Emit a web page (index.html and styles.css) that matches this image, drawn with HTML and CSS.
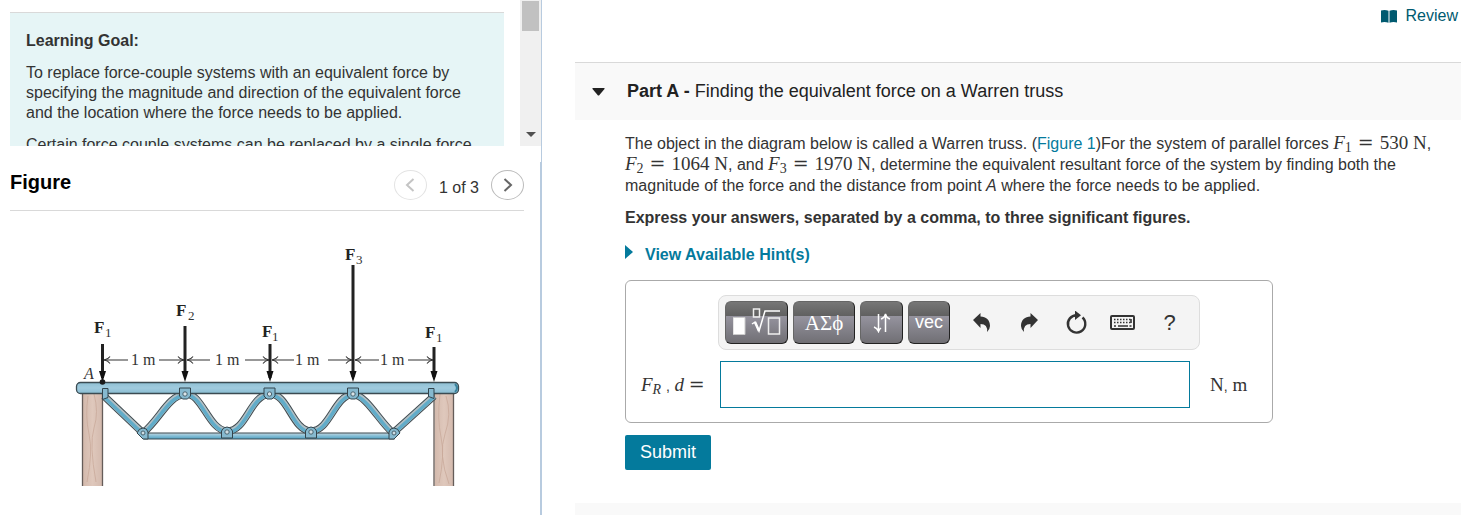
FILE: index.html
```html
<!DOCTYPE html>
<html lang="en">
<head>
<meta charset="utf-8">
<title>Part A - Finding the equivalent force on a Warren truss</title>
<link rel="stylesheet" href="styles.css">
</head>
<body>
<div class="layout">
  <aside class="side">
    <section class="intro">
      <div class="intro-scroll">
        <div class="goal">
          <p><strong>Learning Goal:</strong></p>
          <p>To replace force-couple systems with an equivalent force by specifying the magnitude and direction of the equivalent force and the location where the force needs to be applied.</p>
          <p>Certain force couple systems can be replaced by a single force</p>
        </div>
      </div>
      <div class="scrollbar" aria-hidden="true">
        <div class="thumb"></div>
        <svg width="10" height="6" viewBox="0 0 10 6"><path d="M0 0h10L5 5z" fill="#505050"/></svg>
      </div>
    </section>
    <section class="figure">
      <header class="figure-head">
        <h2>Figure</h2>
        <nav class="pager" aria-label="Figures">
          <button class="page-btn" type="button" aria-label="Previous figure" disabled><svg width="10" height="14" viewBox="0 0 10 14"><path d="M8.500 1L2 7l6.500 6" fill="none" stroke="currentColor" stroke-width="2"/></svg></button>
          <span class="page-count">1 of 3</span>
          <button class="page-btn" type="button" aria-label="Next figure"><svg width="10" height="14" viewBox="0 0 10 14"><path d="M1.500 1L8 7l-6.500 6" fill="none" stroke="currentColor" stroke-width="2"/></svg></button>
        </nav>
      </header>
      <svg class="truss" width="390" height="250" viewBox="75 240 390 250" role="img" aria-label="Warren truss with downward forces">
        <defs>
          <linearGradient id="wood"><stop offset="0" stop-color="#d3b9ac"/><stop offset=".5" stop-color="#dfc8bc"/><stop offset="1" stop-color="#d4baae"/></linearGradient>
          <linearGradient id="chord" x1="0" y1="0" x2="0" y2="1"><stop offset="0" stop-color="#c3d3da"/><stop offset=".4" stop-color="#8fc3d9"/><stop offset="1" stop-color="#4f9fbf"/></linearGradient>
          <linearGradient id="beam" x1="0" y1="0" x2="0" y2="1"><stop offset="0" stop-color="#8fc0d4"/><stop offset=".5" stop-color="#a0cbde"/><stop offset="1" stop-color="#8abdd2"/></linearGradient>
          <g id="down"><path d="M-3.500-9h7L0 2z" fill="#111"/></g>
          <g id="plate"><path d="M-5.500-6h11V2L2.500 5h-5L-5.500 2z" fill="#86b9cf" stroke="#33444c"/><circle r="2.200" fill="#dbe5e9" stroke="#4a6470"/></g>
          <g id="foot"><path d="M-5.500 6V-1Q-4-5 0-5T5.500-1V6z" fill="#86b9cf" stroke="#33444c"/><circle r="2.200" fill="#cfdde3" stroke="#4a6470"/></g>
        </defs>
        <path fill="url(#wood)" d="M83 392h19v94H83z"/>
        <path fill="url(#wood)" d="M434.500 392h19v94h-19z"/>
        <path d="M82.500 392v94M102.500 392v94M434 392v94M453.500 392v94" stroke="#655c59" stroke-width="1.300"/>
        <g fill="none" stroke="#c9a99b" stroke-width=".8">
          <path d="M88 396q-3 20 1 38t-2 48M94 394q5 18 0 34t2 54M440 394q-3 25 1 43t-2 46M446 396q6 18-1 38t4 50"/>
        </g>
        <path d="M144 433h250v6H144z" fill="url(#chord)" stroke="#3b4b52" stroke-width="1.200"/>
        <g fill="none">
          <path d="M104 396L143 433C160 419 168 396 185 394S208 430 227 431S250 396 269 394S292 431 311 431S334 396 353 394C367 396 379 421 393 433L434 396" stroke="#424d52" stroke-width="7.500"/>
          <path d="M104 396L143 433C160 419 168 396 185 394S208 430 227 431S250 396 269 394S292 431 311 431S334 396 353 394C367 396 379 421 393 433L434 396" stroke="#b0bfc5" stroke-width="5.500"/>
          <path d="M104 397L143 434C160 420 168 397 185 395S208 431 227 432S250 397 269 395S292 432 311 432S334 397 353 395C367 397 379 422 393 434L434 397" stroke="#61acc9" stroke-width="3.500"/>
        </g>
        <rect x="76.500" y="382.500" width="382" height="11" rx="4" fill="url(#beam)" stroke="#3b4b52" stroke-width="1.300"/>
        <path d="M455 384q4 4 0 8" fill="none" stroke="#39839d" stroke-width="2"/>
        <path d="M102.500 388.500h5.500v9l-5.500 2zM428.500 388.500h5.500v10l-5.500-2z" fill="#86b9cf" stroke="#33444c"/>
        <use href="#plate" x="185" y="394"/><use href="#plate" x="269.500" y="394"/><use href="#plate" x="353" y="394"/>
        <use href="#foot" x="227" y="432"/><use href="#foot" x="311" y="432"/>
        <path d="M137 433q2-5 6-5t5 4v7h-5zM400 433q-2-5-6-5t-5 4v7h5z" fill="#86b9cf" stroke="#33444c"/>
        <circle cx="143" cy="433" r="2" fill="#cfdde3" stroke="#4a6470"/><circle cx="394" cy="433" r="2" fill="#cfdde3" stroke="#4a6470"/>
        <path d="M102.500 344v34M185 326v50M270 344v34M353 265v112M434 347v30" stroke="#222" stroke-width="3"/>
        <use href="#down" x="102.500" y="380"/><use href="#down" x="185" y="380"/><use href="#down" x="270" y="380"/><use href="#down" x="353" y="380"/><use href="#down" x="434" y="380"/>
        <circle cx="102.500" cy="382" r="2.800" fill="#1a1a1a"/>
        <g fill="none" stroke="#333" stroke-width="1.100">
          <path d="M104 360h24M159 360h25M187 360h23M245 360h24M272 360h22M328 360h24M355 360h24M408 360h25"/>
          <path d="M110 356.500q-2 3-6 3.500q4 .5 6 3.500M193 356.500q-2 3-6 3.500q4 .5 6 3.500M278 356.500q-2 3-6 3.500q4 .5 6 3.500M361 356.500q-2 3-6 3.500q4 .5 6 3.500M178 356.500q2 3 6 3.500q-4 .5-6 3.500M263 356.500q2 3 6 3.500q-4 .5-6 3.500M346 356.500q2 3 6 3.500q-4 .5-6 3.500M427 356.500q2 3 6 3.500q-4 .5-6 3.500"/>
        </g>
        <g class="dim"><text x="131" y="365">1 m</text><text x="215" y="365">1 m</text><text x="295" y="365">1 m</text><text x="380" y="365">1 m</text></g>
        <g class="force">
          <text x="94" y="333">F</text><text x="176" y="316">F</text><text x="262" y="337">F</text><text x="345" y="260">F</text><text x="425" y="338">F</text>
        </g>
        <g class="force-sub">
          <text x="105" y="337">1</text><text x="188" y="320">2</text><text x="272" y="341">1</text><text x="356" y="264">3</text><text x="436" y="342">1</text>
        </g>
        <text class="point" x="84" y="379">A</text>
      </svg>
    </section>
  </aside>

  <main class="main">
    <div class="topbar">
      <a class="review" href="#review"><svg width="16" height="13" viewBox="0 0 16 13"><path d="M0 .5Q4-.5 7.500 .8v12Q4 11.500 0 12.500zM8.500 .8Q12-.5 16 .5v12Q12 11.500 8.500 12.800z" fill="#005a70"/></svg>Review</a>
    </div>
    <section class="part">
      <button class="part-head" type="button" aria-expanded="true">
        <svg width="13" height="8" viewBox="0 0 13 8"><path d="M1 0h11q1 0 .5 1L7 7.500H6L.500 1Q0 0 1 0z" fill="#222"/></svg>
        <span><strong>Part A -</strong> Finding the equivalent force on a Warren truss</span>
      </button>
      <div class="part-body">
        <p class="question">The object in the diagram below is called a Warren truss. (<a href="#figure1">Figure 1</a>)For the system of parallel forces <span class="math"><i>F</i><sub>1</sub><span class="eq">=</span>530 N</span>, <span class="math"><i>F</i><sub>2</sub><span class="eq">=</span>1064 N</span>, and <span class="math"><i>F</i><sub>3</sub><span class="eq">=</span>1970 N</span>, determine the equivalent resultant force of the system by finding both the magnitude of the force and the distance from point <i>A</i> where the force needs to be applied.</p>
        <p class="instruction"><strong>Express your answers, separated by a comma, to three significant figures.</strong></p>
        <a class="hints" href="#hints"><svg width="8" height="14" viewBox="0 0 8 14"><path d="M0 0l8 7-8 7z" fill="#047a9c"/></svg>View Available Hint(s)</a>
        <form class="answer">
          <div class="toolbar">
            <button class="tool root" type="button" aria-label="Templates"><svg width="48" height="30" viewBox="0 0 48 30" fill="none" stroke="#fff"><path d="M0 9.500h12v17H0z" fill="#fff" stroke="#ccc"/><path d="M20.500 1h6v8h-6zM35.500 10h11v16h-11z" stroke="#eee" stroke-width="1.500"/><path d="M19 16l3-2 4 9L32 3h15" stroke-width="1.500"/><path d="M22 14l4 9" stroke-width="2.500"/></svg></button>
            <button class="tool greek" type="button">ΑΣϕ</button>
            <button class="tool arrows" type="button" aria-label="Arrows"><svg width="18" height="20" viewBox="0 0 18 20" fill="none" stroke="#fff" stroke-width="1.500"><path d="M5.500 1v17M1 14q3 1 4.500 4.500Q6.500 16 8 15M12.500 19V2M8 6q3.500-1 4.500-5 1 4 4.500 5"/></svg></button>
            <button class="tool vec" type="button">vec</button>
            <div class="plain-group">
              <button class="plain" type="button" aria-label="Undo"><svg width="18" height="20" viewBox="0 0 18 20"><path d="M0 7L7.500 0v3.500C13 3.500 17 7 17 13q0 3-3 6 1-8-6.500-8v4z" fill="#333"/></svg></button>
              <button class="plain" type="button" aria-label="Redo"><svg width="18" height="20" viewBox="0 0 18 20"><path d="M18 7l-7.500-7v3.500C5 3.500 1 7 1 13q0 3 3 6-1-8 6.500-8v4z" fill="#333"/></svg></button>
              <button class="plain" type="button" aria-label="Reset"><svg width="22" height="24" viewBox="0 0 22 24"><path d="M12 4.200A8.700 8.700 0 1 0 17.500 6.500" fill="none" stroke="#333" stroke-width="2.400"/><path d="M10-.500l6 4.700-6 4.800z" fill="#333"/></svg></button>
              <button class="plain" type="button" aria-label="Keyboard"><svg width="25" height="15" viewBox="0 0 25 15"><rect x="1" y="1" width="23" height="13" rx="1" fill="none" stroke="#333" stroke-width="2"/><path d="M4 4.500h17M4 7.500h17" stroke="#333" stroke-width="1.600" stroke-dasharray="1.500 1.500"/><path d="M4 11h2M8 11h10M19.500 11h2M21 4v4" stroke="#333" stroke-width="1.600"/></svg></button>
              <button class="plain help" type="button" aria-label="Help">?</button>
            </div>
          </div>
          <label class="answer-label math" for="answer"><i>F</i><sub><i>R</i></sub> <span class="comma">,</span> <i>d</i> <span class="eq2">=</span></label>
          <input class="answer-input" id="answer" type="text">
          <span class="unit math">N<span class="comma">,</span> m</span>
        </form>
        <button class="submit" type="button">Submit</button>
      </div>
    </section>
    <div class="next-part"></div>
  </main>
</div>
</body>
</html>
```
FILE: styles.css
```css
* { box-sizing: border-box; }

body {
  margin: 0;
  background: #fff;
  color: #333;
  font: 16px/20px "Liberation Sans", Arial, sans-serif;
  overflow: hidden;
}

p, h2 { margin: 0; }
button { font-family: inherit; cursor: pointer; }
a { color: #047a9c; text-decoration: none; }
svg { display: block; flex: none; }

.layout {
  display: grid;
  grid-template-columns: minmax(0, 542fr) minmax(0, 942fr);
  min-height: 100vh;
}

/* Left column */
.side { display: flex; flex-direction: column; }

.intro {
  display: flex;
  justify-content: space-between;
  padding-bottom: 16px;
  border-right: 1px solid #b8cbdf;
}
.intro-scroll {
  flex: 1;
  height: 146px;
  padding: 12px 16px 0 10px;
  overflow: hidden;
}
.goal {
  display: grid;
  gap: 12px;
  padding: 18px 16px;
  border-top: 1px solid #d9d9d9;
  background: #e6f5f6;
}
.scrollbar {
  display: flex;
  flex-direction: column;
  justify-content: space-between;
  align-items: center;
  width: 21px;
  height: 146px;
  padding: 1px 0 8px;
  background: #f0f0f0;
}
.thumb { width: 17px; height: 30px; background: #c1c1c1; }

.figure {
  flex: 1;
  padding: 0 16px 0 10px;
  border-right: 2px solid #b8cbdf;
}
.figure-head {
  display: flex;
  justify-content: space-between;
  padding: 8px 0 10px;
  border-bottom: 1px solid #d9d9d9;
}
.figure-head h2 { font-size: 20px; line-height: 24px; color: #000; }
.pager { display: flex; align-items: center; gap: 12px; }
.page-count { padding-top: 5px; }
.page-btn {
  display: grid;
  place-items: center;
  width: 33px;
  height: 30px;
  padding: 0;
  border: 1px solid #bbb;
  border-radius: 50%;
  background: #fff;
  color: #666;
}
.page-btn:disabled { border-color: #e3e3e3; color: #c4c4c4; }

.truss { margin: 29px 0 0 65px; }
.truss text { font-family: "Liberation Serif", "Times New Roman", serif; fill: #333; }
.dim text { font-size: 16px; }
.truss .force text { font-size: 17px; font-weight: bold; fill: #222; }
.force-sub text { font-size: 13px; }
.truss .point { font-size: 16px; font-style: italic; }

/* Right column */
.main { display: flex; flex-direction: column; padding: 0 23px 0 33px; }
.topbar { display: flex; justify-content: flex-end; padding: 6px 3px 36px; }
.review { display: flex; align-items: center; gap: 9px; color: #005a70; }

.part-head {
  display: flex;
  align-items: center;
  gap: 22px;
  width: 100%;
  padding: 18px 17px;
  border: 0;
  border-top: 1px solid #d9d9d9;
  background: #f9f9f9;
  color: #222;
  font-size: 18px;
  line-height: 21px;
  text-align: left;
}
.part-body { padding: 13px 16px 0 50px; }
.question { line-height: 21px; }

.math { font-family: "Liberation Serif", "Times New Roman", serif; font-size: 19px; line-height: 20px; white-space: nowrap; }
.math sub { font-size: 14px; line-height: 1px; vertical-align: -3px; }
.question .math { line-height: 1px; }
.eq, .eq2 { font-family: "DejaVu Serif", serif; font-size: 19px; line-height: 1px; }
.eq { margin: 0 6px; }
.comma { font-family: "Liberation Sans", Arial, sans-serif; font-size: 14px; line-height: 1px; }

.instruction { margin-top: 12px; }
.hints {
  display: flex;
  gap: 12px;
  width: fit-content;
  margin-top: 17px;
  font-weight: bold;
}

.answer {
  display: grid;
  grid-template-columns: 79px minmax(0, 470px) minmax(60px, 1fr);
  row-gap: 11px;
  align-items: center;
  max-width: 648px;
  margin-top: 15px;
  padding: 14px 15px;
  border: 1px solid #aaa;
  border-radius: 6px;
}
.toolbar {
  grid-column: 2 / 4;
  display: flex;
  gap: 5px;
  max-width: 482px;
  margin-left: -2px;
  padding: 5px 6px;
  border: 1px solid #ddd;
  border-radius: 8px;
  background: #f4f4f4;
}
.tool {
  display: grid;
  place-items: center;
  height: 43px;
  padding: 0;
  border: 1px solid #666;
  border-right-color: #222;
  border-bottom-color: #222;
  border-radius: 6px;
  background: linear-gradient(#777, #606060 34%, #95939e 35%, #706f74);
  color: #fff;
}
.root { width: 63px; }
.greek { width: 62px; font: 21px/24px "Liberation Serif", serif; }
.arrows { width: 43px; }
.vec { width: 42px; font-size: 18px; }
.plain-group {
  display: grid;
  flex: 1;
  grid-template-columns: repeat(5, 1fr);
  padding-left: 4px;
}
.plain {
  display: grid;
  place-items: center;
  padding: 0;
  border: 0;
  background: none;
  color: #333;
}
.help { font-size: 22px; }
.answer-label { justify-self: start; }
.answer-input {
  width: 100%;
  height: 47px;
  padding: 0 8px;
  border: 1px solid #047a9c;
  border-radius: 0;
  background: #fff;
  font: inherit;
}
.unit { justify-self: start; margin-left: 20px; }
.submit {
  display: block;
  margin-top: 12px;
  padding: 7px 15px 8px;
  border: 0;
  border-radius: 2px;
  background: #047a9c;
  color: #fff;
  font-size: 18px;
  line-height: 20px;
}
.next-part { flex: 1; margin-top: 33px; background: #f9f9f9; }
```
